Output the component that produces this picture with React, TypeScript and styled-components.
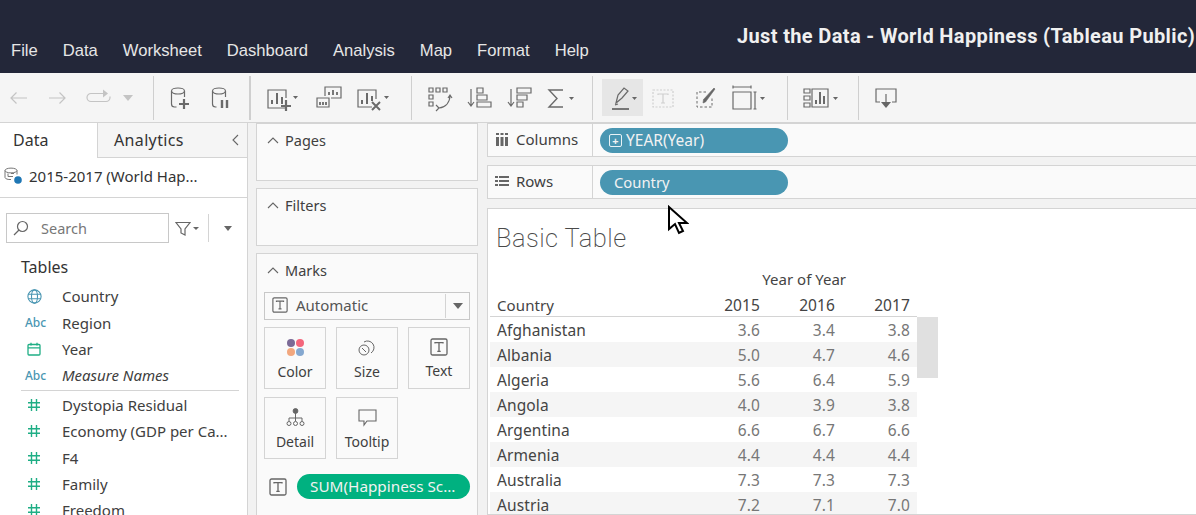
import React from "react";
import styled, { createGlobalStyle } from "styled-components";

const Global = createGlobalStyle`
  html, body { margin: 0; padding: 0; background: #f5f5f5; overflow: hidden; }
  * { box-sizing: border-box; }
  #root { width: 1196px; height: 515px; overflow: hidden; }
`;

const Page = styled.div`
  width: 1196px;
  height: 515px;
  overflow: hidden;
  position: relative;
  font-family: "Noto Sans", "Open Sans", sans-serif;
  color: #333;
  background: #f2f2f2;
`;

const Header = styled.header`
  height: 73px;
  background: #232739;
  display: flex;
  justify-content: space-between;
  white-space: nowrap;
`;
const Menu = styled.nav`
  display: flex;
  padding: 42px 0 0 11px;
  gap: 25px;
  font-family: "Liberation Sans", sans-serif;
  font-size: 16.6px;
  line-height: 18px;
  color: #e6e6e6;
`;
const Title = styled.h1`
  margin: 0;
  padding: 25px 0 0 0;
  width: 459px;
  font-family: "Roboto", sans-serif;
  font-weight: 700;
  font-size: 20px;
  letter-spacing: 0.36px;
  line-height: 22px;
  color: #f0f0f0;
`;

const Toolbar = styled.div`
  height: 50px;
  background: #f5f5f5;
  border-bottom: 1px solid #d4d4d4;
  display: flex;
  align-items: center;
`;
const ToolGroup = styled.div<{ $w: number; $pad: number; $gap?: number; $sep?: number }>`
  width: ${(p) => p.$w}px;
  height: 44px;
  flex: none;
  display: flex;
  align-items: center;
  padding-left: ${(p) => p.$pad}px;
  gap: ${(p) => p.$gap ?? 10}px;
  border-right: ${(p) => p.$sep ?? 1}px solid #cfcfcf;
`;
const ToolIcon = styled.svg<{ $w?: number; $stroke?: string; $ml?: number }>`
  width: ${(p) => p.$w ?? 30}px;
  height: 30px;
  flex: none;
  fill: none;
  stroke: ${(p) => p.$stroke ?? "#6a6a6a"};
  stroke-width: 1.2;
  margin-left: ${(p) => p.$ml ?? 0}px;
`;
const HighlightBtn = styled.div`
  width: 41px;
  height: 37px;
  background: #e6e6e6;
  display: flex;
  align-items: center;
  justify-content: center;
  flex: none;
`;

const Body = styled.div`
  display: flex;
  height: 392px;
`;

const LeftPanel = styled.aside`
  width: 248px;
  flex: none;
  background: #fff;
  border-right: 1px solid #d4d4d4;
  overflow: hidden;
`;
const Tabs = styled.div`
  display: flex;
  height: 35px;
`;
const Tab = styled.div<{ $active?: boolean }>`
  width: ${(p) => (p.$active ? 97 : 150)}px;
  padding: 0 7px ${(p) => (p.$active ? 2 : 1)}px ${(p) => (p.$active ? 13 : 16)}px;
  font-size: 16px;
  letter-spacing: ${(p) => (p.$active ? 0 : 0.35)}px;
  background: ${(p) => (p.$active ? "#fff" : "#f5f5f5")};
  border-bottom: ${(p) => (p.$active ? "none" : "1px solid #d4d4d4")};
  border-left: ${(p) => (p.$active ? "none" : "1px solid #d4d4d4")};
  display: flex;
  align-items: center;
  justify-content: space-between;
`;
const Source = styled.div`
  height: 40px;
  border-bottom: 1px solid #d4d4d4;
  display: flex;
  align-items: center;
  padding: 0 0 3px 3px;
  gap: 6px;
  font-size: 15px;
`;
const SearchRow = styled.div`
  display: flex;
  align-items: center;
  padding: 15px 0 0 6px;
  height: 45px;
`;
const SearchBox = styled.div`
  width: 163px;
  flex: none;
  height: 30px;
  border: 1px solid #c8c8c8;
  display: flex;
  align-items: center;
  padding-left: 6px;
  gap: 12px;
  font-size: 14.5px;
  color: #777;
`;
const FilterBtn = styled.div`
  width: 40px;
  flex: none;
  height: 28px;
  display: flex;
  align-items: center;
  padding-left: 6px;
  border-right: 1px solid #d4d4d4;
`;
const Caret = styled.span<{ $size?: number; $color?: string; $ml?: number }>`
  display: inline-block;
  flex: none;
  width: 0;
  height: 0;
  margin-left: ${(p) => p.$ml ?? 0}px;
  border-left: ${(p) => p.$size ?? 3}px solid transparent;
  border-right: ${(p) => p.$size ?? 3}px solid transparent;
  border-top: ${(p) => Math.round((p.$size ?? 3) * 1.1)}px solid ${(p) => p.$color ?? "#666"};
`;
const CaretSlot = styled.div`
  width: 38px;
  flex: none;
  text-align: center;
  line-height: 0;
`;
const SectionLabel = styled.div`
  padding: 14px 0 0 21px;
  font-size: 16px;
  line-height: 20px;
  color: #333;
`;
const FieldList = styled.ul`
  list-style: none;
  margin: 6px 0 0;
  padding: 0;
`;
const Field = styled.li<{ $italic?: boolean }>`
  height: 26.4px;
  display: flex;
  align-items: center;
  font-size: 15px;
  font-style: ${(p) => (p.$italic ? "italic" : "normal")};
  color: #404040;
  white-space: nowrap;
`;
const FieldIcon = styled.span<{ $color: string }>`
  width: 62px;
  flex: none;
  padding-left: 27px;
  display: flex;
  align-items: center;
  color: ${(p) => p.$color};
`;
const AbcMark = styled.span`
  margin-left: -2px;
  font-size: 12px;
  font-style: normal;
  font-weight: 500;
`;
const FieldRule = styled.hr`
  margin: 1px 8px 1px 21px;
  border: 0;
  border-top: 1px solid #d4d4d4;
  height: 0;
`;

const MiddleColumn = styled.div`
  width: 222px;
  margin: 0 8px;
  flex: none;
  display: flex;
  flex-direction: column;
  gap: 7px;
  overflow: hidden;
`;
const Card = styled.section<{ $h: number }>`
  height: ${(p) => p.$h}px;
  flex: none;
  background: #fafafa;
  border: 1px solid #d4d4d4;
  padding: 6px 7px 0;
`;
const CardTitle = styled.div`
  display: flex;
  align-items: center;
  gap: 6px;
  padding-left: 3px;
  font-size: 14.5px;
  line-height: 20px;
  color: #404040;
`;
const MarkSelect = styled.div`
  margin-top: 12px;
  height: 28px;
  border: 1px solid #c8c8c8;
  display: flex;
  align-items: center;
  padding: 0 0 2px 7px;
  gap: 8px;
  font-size: 15px;
  color: #555;
`;
const SelectArrow = styled.div`
  margin: 0 0 -2px auto;
  width: 24px;
  height: 100%;
  border-left: 1px solid #d4d4d4;
  display: flex;
  align-items: center;
  justify-content: center;
`;
const MarkGrid = styled.div`
  margin-top: 7px;
  display: grid;
  grid-template-columns: repeat(3, 62px);
  grid-auto-rows: 62px;
  gap: 8px 10px;
`;
const MarkBtn = styled.div`
  border: 1px solid #d4d4d4;
  display: flex;
  flex-direction: column;
  align-items: center;
  padding-top: 10px;
  font-size: 14px;
  line-height: 18px;
  color: #404040;
  gap: 6px;
`;
const MarkPillRow = styled.div`
  margin-top: 15px;
  display: flex;
  align-items: center;
  padding-left: 5px;
  gap: 10px;
`;
const Pill = styled.div<{ $bg: string; $w: number; $fs: number }>`
  width: ${(p) => p.$w}px;
  height: 25px;
  border-radius: 13px;
  background: ${(p) => p.$bg};
  color: #f2f2f2;
  font-size: ${(p) => p.$fs}px;
  line-height: 25px;
  display: flex;
  align-items: center;
  white-space: nowrap;
  overflow: hidden;
  flex: none;
`;
const PillText = styled.span<{ $pad: number }>`
  padding-left: ${(p) => p.$pad}px;
`;
const PlusBox = styled.span`
  width: 13px;
  height: 13px;
  flex: none;
  margin-left: 9px;
  margin-right: 4px;
  border: 1px solid #e8f2f6;
  border-radius: 2px;
  display: flex;
  align-items: center;
  justify-content: center;
  font-size: 11px;
  line-height: 11px;
  font-weight: 700;
`;

const Workspace = styled.main`
  flex: 1;
  min-width: 0;
  display: flex;
  flex-direction: column;
  gap: 8px;
  padding-left: 1px;
`;
const Shelf = styled.div<{ $h: number }>`
  height: ${(p) => p.$h}px;
  flex: none;
  display: flex;
  align-items: center;
  background: #fafafa;
  border: 1px solid #d4d4d4;
  border-right: none;
`;
const ShelfLabel = styled.div`
  width: 105px;
  height: 100%;
  flex: none;
  display: flex;
  align-items: center;
  padding: 0 0 2px 7px;
  gap: 7px;
  border-right: 1px solid #d4d4d4;
  margin-right: 7px;
  font-size: 15px;
  color: #404040;
`;
const Viz = styled.div`
  flex: 1;
  margin-top: 1px;
  background: #fff;
  border: 1px solid #d4d4d4;
  border-right: none;
  padding: 12px 0 0 8px;
  overflow: hidden;
`;
const VizTitle = styled.h2`
  margin: 0;
  font-family: "Roboto", sans-serif;
  font-weight: 200;
  font-size: 25.5px;
  line-height: 34px;
  letter-spacing: 0.45px;
  color: #4a4a4a;
`;
const TableWrap = styled.div`
  margin: 13px 0 0 -6px;
  display: flex;
  align-items: flex-start;
`;
const DataTable = styled.div`
  width: 427px;
  flex: none;
`;
const Thumb = styled.div`
  width: 21px;
  height: 61px;
  margin-top: 49px;
  background: #e0e0e0;
`;
const SuperHead = styled.div`
  height: 25px;
  padding-right: 71px;
  text-align: right;
  font-size: 15px;
  line-height: 22px;
  color: #444;
`;
const TableRow = styled.div<{ $shade?: boolean; $head?: boolean }>`
  height: ${(p) => (p.$head ? 24 : 25)}px;
  display: grid;
  grid-template-columns: 188px 75px 75px 75px;
  padding-left: 7px;
  align-items: center;
  font-size: 15.5px;
  letter-spacing: 0.1px;
  background: ${(p) => (p.$shade ? "#f5f5f5" : "#fff")};
  border-bottom: ${(p) => (p.$head ? "1px solid #d4d4d4" : "none")};
  color: #444;
`;
const HeadLabel = styled.span`
  font-size: 15px;
`;
const Num = styled.span<{ $head?: boolean }>`
  text-align: right;
  color: ${(p) => (p.$head ? "#444" : "#777")};
`;

const Cursor = styled.svg`
  position: absolute;
  left: 667px;
  top: 205px;
  width: 22px;
  height: 31px;
`;

const TIcon = ({ size = 18, color = "#666" }: { size?: number; color?: string }) => (
  <svg width={size} height={size} viewBox="0 0 18 18" fill="none" stroke={color} strokeWidth="1.3">
    <rect x="1" y="1" width="16" height="16" rx="1.5" />
    <path d="M5 5.5V4.7h8v.8M9 4.7v8.6M7.3 13.3h3.4" />
  </svg>
);

const Chevron = () => (
  <svg width="12" height="7" viewBox="0 0 12 7" fill="none" stroke="#666" strokeWidth="1.1">
    <path d="M1 6l5-5 5 5" />
  </svg>
);

const Hash = () => (
  <svg width="14" height="14" viewBox="0 0 14 14" stroke="#1fae85" strokeWidth="1.4">
    <path d="M4.5 1v12M9.5 1v12M1 4.8h12M1 9.2h12" />
  </svg>
);
const Globe = () => (
  <svg width="15" height="15" viewBox="0 0 15 15" fill="none" stroke="#4a96b2" strokeWidth="1.1">
    <circle cx="7.5" cy="7.5" r="6.6" />
    <ellipse cx="7.5" cy="7.5" rx="3" ry="6.6" />
    <path d="M1.2 5.3h12.6M1.2 9.7h12.6" />
  </svg>
);
const Calendar = () => (
  <svg width="14" height="14" viewBox="0 0 14 14" fill="none" stroke="#1fae85" strokeWidth="1.3">
    <rect x="1" y="2.5" width="12" height="10.5" rx="1" />
    <path d="M1 5.8h12M4 .8v2.6M10 .8v2.6" />
  </svg>
);

const fields = [
  { name: "Country", kind: "globe" },
  { name: "Region", kind: "abc" },
  { name: "Year", kind: "date" },
  { name: "Measure Names", kind: "abc", italic: true },
  { name: "rule", kind: "rule" },
  { name: "Dystopia Residual", kind: "num" },
  { name: "Economy (GDP per Ca...", kind: "num" },
  { name: "F4", kind: "num" },
  { name: "Family", kind: "num" },
  { name: "Freedom", kind: "num" },
];

const rows: [string, string, string, string][] = [
  ["Afghanistan", "3.6", "3.4", "3.8"],
  ["Albania", "5.0", "4.7", "4.6"],
  ["Algeria", "5.6", "6.4", "5.9"],
  ["Angola", "4.0", "3.9", "3.8"],
  ["Argentina", "6.6", "6.7", "6.6"],
  ["Armenia", "4.4", "4.4", "4.4"],
  ["Australia", "7.3", "7.3", "7.3"],
  ["Austria", "7.2", "7.1", "7.0"],
];

const menuItems = ["File", "Data", "Worksheet", "Dashboard", "Analysis", "Map", "Format", "Help"];

const ToolCaret = () => <path d="M24 14h5l-2.5 3z" fill="#666" stroke="none" />;

export default function App() {
  return (
    <Page>
      <Global />
      <Header>
        <Menu>
          {menuItems.map((m) => (
            <span key={m}>{m}</span>
          ))}
        </Menu>
        <Title>Just the Data - World Happiness (Tableau Public)</Title>
      </Header>

      <Toolbar>
        <ToolGroup $w={154} $pad={3}>
          <ToolIcon viewBox="0 0 30 30" $stroke="#c4c4c4">
            <path d="M24 15H8M13.5 9.5L8 15l5.5 5.5" />
          </ToolIcon>
          <ToolIcon viewBox="0 0 30 30" $stroke="#c4c4c4">
            <path d="M6 15h16M16.5 9.5L22 15l-5.5 5.5" />
          </ToolIcon>
          <ToolIcon viewBox="0 0 30 30" $stroke="#c4c4c4">
            <path d="M20 10.5H8a4 4 0 0 0 0 8h15a4 4 0 0 0 4-4v-1" />
            <path d="M20 6.5l5 4-5 4z" fill="#c4c4c4" stroke="none" />
          </ToolIcon>
          <Caret $size={5} $color="#c4c4c4" />
        </ToolGroup>
        <ToolGroup $w={97} $pad={11} $gap={11} $sep={2}>
          <ToolIcon viewBox="0 0 30 30">
            <ellipse cx="13" cy="8" rx="6.5" ry="3" />
            <path d="M6.5 8v13a3 3 0 0 0 3 3h2M19.5 8v6" />
            <path d="M19 16v10M14 21h10" strokeWidth="2.2" />
          </ToolIcon>
          <ToolIcon viewBox="0 0 30 30">
            <ellipse cx="13" cy="8" rx="6.5" ry="3" />
            <path d="M6.5 8v13a3 3 0 0 0 3 3h1M19.5 8v6" />
            <path d="M16 17v8M21 17v8" strokeWidth="2.4" />
          </ToolIcon>
        </ToolGroup>
        <ToolGroup $w={161} $pad={14}>
          <ToolIcon $w={34} viewBox="0 0 34 30">
            <path d="M20 25H3V7h18v8" />
            <path d="M7 21v-4M12 21V10M17 21v-7" strokeWidth="2" />
            <path d="M21 17v11M16 23h10" strokeWidth="2.2" />
            <path d="M28 13h5l-2.5 3z" fill="#666" stroke="none" />
          </ToolIcon>
          <ToolIcon viewBox="0 0 30 30" $ml={5}>
            <path d="M11 13V4h16v11H17" />
            <path d="M3 15h12v9H3z" />
            <path d="M15 12V9M19 12V7M23 12V9M6 22v-3M9 22v-3M12 22v-3" strokeWidth="1.8" />
          </ToolIcon>
          <ToolIcon $w={36} viewBox="0 0 36 30" $ml={1}>
            <path d="M17 24H3V7h18v9" />
            <path d="M7 21v-4M12 21V10M17 18v-5" strokeWidth="2" />
            <path d="M17 19l8 8M25 19l-8 8" strokeWidth="2" />
            <path d="M29 13h5l-2.5 3z" fill="#666" stroke="none" />
          </ToolIcon>
        </ToolGroup>
        <ToolGroup $w={181} $pad={12}>
          <ToolIcon viewBox="0 0 30 30">
            <path d="M5 5h4v4H5zM12 5h4v4h-4zM19 5h4v4h-4zM5 12h4v4H5zM5 19h4v4H5z" />
            <path d="M26 12c0 7-4 12-11 13M12 22l3 3-3 3M24 15l2-3 2 3" />
          </ToolIcon>
          <ToolIcon viewBox="0 0 30 30">
            <path d="M7 6v17M4 19l3 4 3-4" />
            <path d="M13 5h6v5h-6zM13 12h10v5H13zM13 19h14v5H13z" />
          </ToolIcon>
          <ToolIcon viewBox="0 0 30 30">
            <path d="M7 6v17M4 19l3 4 3-4" />
            <path d="M13 5h14v5H13zM13 12h10v5H13zM13 19h6v5h-6z" />
          </ToolIcon>
          <ToolIcon viewBox="0 0 30 30" $ml={1}>
            <path d="M18 7H4l8 8.5L4 24h14" strokeWidth="1.4" />
            <ToolCaret />
          </ToolIcon>
        </ToolGroup>
        <ToolGroup $w={195} $pad={9} $gap={0}>
          <HighlightBtn>
            <ToolIcon viewBox="0 0 30 30">
              <path d="M8 20l2-8 6-7 4 3-6 7z M10 21l-3 1" />
              <path d="M4 26h17" strokeWidth="1.8" />
              <ToolCaret />
            </ToolIcon>
          </HighlightBtn>
          <ToolIcon $w={26} viewBox="0 0 26 30" $stroke="#cfcfcf" $ml={7}>
            <rect x="3" y="7" width="20" height="17" strokeDasharray="2 1.5" />
            <path d="M8 12v-1h10v1M13 11v9M11 20h4" />
          </ToolIcon>
          <ToolIcon $w={28} viewBox="0 0 28 30" $ml={16}>
            <path d="M14 9H5v15h15v-9" strokeDasharray="2.5 2" strokeWidth="1" />
            <path d="M11 20l2.5-1L23 6l-1-1-10.5 11.5z" fill="#666" strokeWidth="0.6" />
          </ToolIcon>
          <ToolIcon $w={36} viewBox="0 0 36 30" $ml={10}>
            <path d="M3 4h18M3 2.5v3M21 2.5v3" />
            <path d="M3 9h18v17H3z" />
            <path d="M25 9v17M23.5 9h3M23.5 26h3" />
            <path d="M30 14h5l-2.5 3z" fill="#666" stroke="none" />
          </ToolIcon>
        </ToolGroup>
        <ToolGroup $w={71} $pad={14}>
          <ToolIcon $w={38} viewBox="0 0 38 30">
            <path d="M2 6h6v4H2zM2 13h6v4H2zM2 20h6v4H2z" />
            <path d="M10 6h16v18H10z" />
            <path d="M14 21v-4M18 21V9M22 21v-8" strokeWidth="2" />
            <path d="M31 14h5l-2.5 3z" fill="#666" stroke="none" />
          </ToolIcon>
        </ToolGroup>
        <ToolGroup $w={55} $pad={12} $sep={0}>
          <ToolIcon viewBox="0 0 30 30">
            <path d="M9 19H5V6h20v13h-4" />
            <path d="M15 11v11" />
            <path d="M10 19h10l-5 6z" fill="#666" stroke="none" />
          </ToolIcon>
        </ToolGroup>
      </Toolbar>

      <Body>
        <LeftPanel>
          <Tabs>
            <Tab $active>Data</Tab>
            <Tab>
              Analytics
              <svg width="9" height="12" viewBox="0 0 9 12" fill="none" stroke="#666" strokeWidth="1.1">
                <path d="M7 1L2 6l5 5" />
              </svg>
            </Tab>
          </Tabs>
          <Source>
            <svg width="20" height="20" viewBox="0 0 20 20" fill="none" stroke="#777" strokeWidth="1">
              <ellipse cx="8" cy="4.5" rx="6" ry="2.4" />
              <path d="M2 4.5v7a5 2.2 0 0 0 6 2M14 4.5v4M5 7.5v3h5M8 7.5h3" />
              <circle cx="15" cy="14" r="3.8" fill="#1f77b4" stroke="none" />
            </svg>
            2015-2017 (World Hap...
          </Source>
          <SearchRow>
            <SearchBox>
              <svg width="16" height="16" viewBox="0 0 16 16" fill="none" stroke="#666" strokeWidth="1.2">
                <circle cx="9.5" cy="6.5" r="5" />
                <path d="M6 10l-5 5" />
              </svg>
              Search
            </SearchBox>
            <FilterBtn>
              <svg width="16" height="15" viewBox="0 0 16 15" fill="none" stroke="#666" strokeWidth="1.2">
                <path d="M1 1.5h14L10 8v6l-4-2V8z" />
              </svg>
              <Caret $ml={2} />
            </FilterBtn>
            <CaretSlot>
              <Caret $size={4.5} />
            </CaretSlot>
          </SearchRow>
          <SectionLabel>Tables</SectionLabel>
          <FieldList>
            {fields.map((f) =>
              f.kind === "rule" ? (
                <FieldRule key={f.name} />
              ) : (
                <Field key={f.name} $italic={f.italic}>
                  <FieldIcon $color={f.kind === "abc" ? "#4a96b2" : "#1fae85"}>
                    {f.kind === "globe" && <Globe />}
                    {f.kind === "abc" && <AbcMark>Abc</AbcMark>}
                    {f.kind === "date" && <Calendar />}
                    {f.kind === "num" && <Hash />}
                  </FieldIcon>
                  {f.name}
                </Field>
              )
            )}
          </FieldList>
        </LeftPanel>

        <MiddleColumn>
          <Card $h={58}>
            <CardTitle>
              <Chevron />
              Pages
            </CardTitle>
          </Card>
          <Card $h={58}>
            <CardTitle>
              <Chevron />
              Filters
            </CardTitle>
          </Card>
          <Card $h={280}>
            <CardTitle>
              <Chevron />
              Marks
            </CardTitle>
            <MarkSelect>
              <TIcon size={16} />
              Automatic
              <SelectArrow>
                <Caret $size={5} />
              </SelectArrow>
            </MarkSelect>
            <MarkGrid>
              <MarkBtn>
                <svg width="19" height="19" viewBox="0 0 19 19">
                  <circle cx="5" cy="5" r="4" fill="#7b6a96" />
                  <circle cx="14" cy="5" r="4" fill="#f4667c" />
                  <circle cx="5" cy="14" r="4" fill="#f2a77e" />
                  <circle cx="14" cy="14" r="4" fill="#85a8d0" />
                </svg>
                Color
              </MarkBtn>
              <MarkBtn>
                <svg width="19" height="19" viewBox="0 0 19 19" fill="none" stroke="#666" strokeWidth="1">
                  <path d="M6 4a6.5 6.5 0 1 1 7 11" />
                  <circle cx="6" cy="12" r="5" />
                  <path d="M4 10l4 4" />
                </svg>
                Size
              </MarkBtn>
              <MarkBtn>
                <TIcon size={18} />
                Text
              </MarkBtn>
              <MarkBtn>
                <svg width="19" height="19" viewBox="0 0 19 19" fill="none" stroke="#666" strokeWidth="1">
                  <circle cx="9.5" cy="3" r="2.4" fill="#666" />
                  <path d="M9.5 5v8M3 13v-3h13v3" />
                  <circle cx="3" cy="15.5" r="2" />
                  <circle cx="9.5" cy="15.5" r="2" />
                  <circle cx="16" cy="15.5" r="2" />
                </svg>
                Detail
              </MarkBtn>
              <MarkBtn>
                <svg width="19" height="19" viewBox="0 0 19 19" fill="none" stroke="#666" strokeWidth="1.1">
                  <path d="M1 2h17v11H9l-3 4v-4H1z" />
                </svg>
                Tooltip
              </MarkBtn>
            </MarkGrid>
            <MarkPillRow>
              <TIcon size={18} />
              <Pill $bg="#00b180" $w={173} $fs={15.3}>
                <PillText $pad={13}>SUM(Happiness Sc...</PillText>
              </Pill>
            </MarkPillRow>
          </Card>
        </MiddleColumn>

        <Workspace>
          <Shelf $h={34}>
            <ShelfLabel>
              <svg width="14" height="14" viewBox="0 0 14 14" fill="#666">
                <rect x="1" y="5" width="3" height="9" />
                <rect x="5.5" y="5" width="3" height="9" />
                <rect x="10" y="5" width="3" height="9" />
                <rect x="1" y="1" width="3" height="2" />
                <rect x="5.5" y="1" width="3" height="2" />
                <rect x="10" y="1" width="3" height="2" />
              </svg>
              Columns
            </ShelfLabel>
            <Pill $bg="#4996b2" $w={188} $fs={15.5}>
              <PlusBox>+</PlusBox>
              YEAR(Year)
            </Pill>
          </Shelf>
          <Shelf $h={34}>
            <ShelfLabel>
              <svg width="14" height="14" viewBox="0 0 14 14" fill="#666">
                <rect x="0" y="2" width="3" height="2" />
                <rect x="4" y="2" width="10" height="2" />
                <rect x="0" y="6" width="3" height="2" />
                <rect x="4" y="6" width="10" height="2" />
                <rect x="0" y="10" width="3" height="2" />
                <rect x="4" y="10" width="10" height="2" />
              </svg>
              Rows
            </ShelfLabel>
            <Pill $bg="#4996b2" $w={188} $fs={14.8}>
              <PillText $pad={14}>Country</PillText>
            </Pill>
          </Shelf>
          <Viz>
            <VizTitle>Basic Table</VizTitle>
            <TableWrap>
              <DataTable>
                <SuperHead>Year of Year</SuperHead>
                <TableRow $head>
                  <HeadLabel>Country</HeadLabel>
                  <Num $head>2015</Num>
                  <Num $head>2016</Num>
                  <Num $head>2017</Num>
                </TableRow>
                {rows.map((r, i) => (
                  <TableRow key={r[0]} $shade={i % 2 === 1}>
                    <span>{r[0]}</span>
                    <Num>{r[1]}</Num>
                    <Num>{r[2]}</Num>
                    <Num>{r[3]}</Num>
                  </TableRow>
                ))}
              </DataTable>
              <Thumb />
            </TableWrap>
          </Viz>
        </Workspace>
      </Body>

      <Cursor viewBox="0 0 22 31">
        <path d="M2 2v22l6-5 4 9 4-2-4-8h8z" fill="#fff" stroke="#000" strokeWidth="2" strokeLinejoin="miter" />
      </Cursor>
    </Page>
  );
}
